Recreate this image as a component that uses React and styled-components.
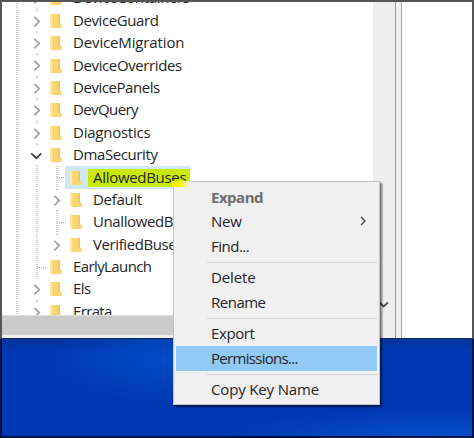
import React from 'react'
import styled, { createGlobalStyle } from 'styled-components'

const GlobalStyle = createGlobalStyle`
  body {
    margin: 0;
    overflow: hidden;
    font-family: 'Open Sans', 'Noto Sans', sans-serif;
    font-size: 15px;
    color: #252525;
  }
  * {
    box-sizing: border-box;
  }
`

const Desktop = styled.div`
  position: relative;
  display: flex;
  flex-direction: column;
  width: 474px;
  height: 438px;
  overflow: hidden;
`

const Wallpaper = styled.div`
  flex: 1;
  border: 2px solid #001248;
  border-top: 0;
  background:
    radial-gradient(ellipse 120px 44px at 165px 20px, #004bc4 0%, rgba(0, 75, 196, 0) 100%),
    radial-gradient(ellipse 200px 24px at 430px 95px, #064dc8 0%, rgba(6, 77, 200, 0) 100%),
    linear-gradient(#02349c, #0038b4 14px, #0038b4 100%);
`

const Window = styled.div`
  display: flex;
  width: 474px;
  height: 339px;
  border: 2px solid #575556;
  border-bottom: 1px solid #14295c;
  background: #fff;
`

const TreePane = styled.div`
  display: flex;
  flex-direction: column;
  width: 371px;
`

const Tree = styled.div`
  height: 313px;
  overflow: hidden;
`

const Rows = styled.div`
  margin-top: -14.8px;
  padding-left: 4.5px;
`

const Row = styled.div`
  display: flex;
  height: 22.4px;
`

const HorizontalBar = styled.div`
  height: 23px;
  background: #cbcbcb;
  border-top: 1px solid #dedede;
  border-bottom: 3px solid #efefef;
`

const VerticalBar = styled.div`
  display: flex;
  align-items: flex-end;
  justify-content: center;
  width: 22px;
  padding-bottom: 29px;
  background: #eee;
`

const Splitter = styled.div`
  width: 7px;
  border-left: 1px solid #999;
  border-right: 1px solid #a8a8a8;
  background: #f0f0f0;
`

const GuideCell = styled.svg`
  flex: none;
  width: 20px;
  height: 22.4px;
`

const Entry = styled.div`
  display: flex;
  align-items: center;
  margin-left: -1.5px;
  padding-left: 5px;
  background: ${props => (props.$selected ? '#cde8fb' : 'none')};
`

const Label = styled.span`
  margin-left: 6px;
  padding: 0 4px 0 5px;
  height: 18px;
  line-height: 17px;
  white-space: nowrap;
  letter-spacing: ${props => props.$spacing}px;
  background: ${props => (props.$marked ? '#c8e900' : 'none')};
`

const Menu = styled.div`
  position: absolute;
  left: 173px;
  top: 181px;
  width: 207px;
  height: 224px;
  padding: 3px 2px;
  border: 1px solid #c4c4c4;
  background: #f0f0f0;
  box-shadow: 2px 2px 2px rgba(0, 0, 0, 0.55);
`

const MarkerEdge = styled.div`
  position: absolute;
  left: -2px;
  top: -1px;
  width: 18px;
  height: 6px;
  background: linear-gradient(90deg, #ecf500 0%, #fbf200 55%, #f4f0a0 75%, #f0f0f0);
`

const MenuItem = styled.div`
  display: flex;
  align-items: center;
  justify-content: space-between;
  height: 24.5px;
  padding: 0 11px 1px 35px;
  font-weight: ${props => (props.$bold ? 700 : 400)};
  color: ${props => (props.$bold ? '#6d6d6d' : '#252525')};
  letter-spacing: ${props => props.$spacing || 0}px;
  background: ${props => (props.$active ? '#91c9f7' : 'none')};
`

const Separator = styled.div`
  height: 7px;
  margin-left: 31px;
  padding-top: 3px;

  &::after {
    content: '';
    display: block;
    height: 1px;
    background: #d5d5d5;
  }
`

const Guide = ({ type }) => (
  <GuideCell viewBox="0 0 20 22.4" fill="none">
    {type === 'line' && <path d="M10 0v22.4" stroke="#a0a0a0" strokeDasharray="1 1" />}
    {type === 'branch' && <path d="M10 0v22.4M10 11.7h9" stroke="#a0a0a0" strokeDasharray="1 1" />}
    {(type === 'closed' || type === 'open') && <path d="M10 0v1M10 21.4v1" stroke="#999" />}
    {type === 'closed' && <path d="M7.3 6.8l5 4.8-5 4.8" stroke="#a2a2a2" strokeWidth="1.7" />}
    {type === 'open' && <path d="M4.3 9.4l5 4.8 5-4.8" stroke="#404040" strokeWidth="1.8" />}
  </GuideCell>
)

const Folder = () => (
  <svg width="12" height="16" viewBox="0 0 12 16">
    <path d="M0 1h9.6v9l2.1 1.2V15H0z" fill="#f8d672" />
    <path d="M0 1l2.3 1.2V15H0z" fill="#fee7a4" />
    <path d="M8.3 1h1.5v10.4l-1.5-1z" fill="#eec259" />
  </svg>
)

const keys = [
  { name: 'DeviceContainers', guides: ['line', 'closed'], spacing: -0.35 },
  { name: 'DeviceGuard', guides: ['line', 'closed'], spacing: -0.4 },
  { name: 'DeviceMigration', guides: ['line', 'closed'], spacing: -0.14 },
  { name: 'DeviceOverrides', guides: ['line', 'closed'], spacing: -0.38 },
  { name: 'DevicePanels', guides: ['line', 'closed'], spacing: -0.45 },
  { name: 'DevQuery', guides: ['line', 'closed'], spacing: -0.6 },
  { name: 'Diagnostics', guides: ['line', 'closed'], spacing: -0.24 },
  { name: 'DmaSecurity', guides: ['line', 'open'], spacing: -0.4 },
  { name: 'AllowedBuses', guides: ['line', 'line', 'branch'], spacing: -0.3, selected: true },
  { name: 'Default', guides: ['line', 'line', 'closed'], spacing: -0.3 },
  { name: 'UnallowedBuses', guides: ['line', 'line', 'branch'], spacing: -0.4 },
  { name: 'VerifiedBuses', guides: ['line', 'line', 'closed'], spacing: -0.4 },
  { name: 'EarlyLaunch', guides: ['line', 'branch'], spacing: -0.6 },
  { name: 'Els', guides: ['line', 'closed'], spacing: -0.6 },
  { name: 'Errata', guides: ['line', 'closed'], spacing: -0.65 },
]

const App = () => {
  return (
    <Desktop>
      <GlobalStyle />
      <Window>
        <TreePane>
          <Tree>
            <Rows>
              {keys.map(key => (
                <Row key={key.name}>
                  {key.guides.map((type, i) => (
                    <Guide key={i} type={type} />
                  ))}
                  <Entry $selected={key.selected}>
                    <Folder />
                    <Label $marked={key.selected} $spacing={key.spacing}>{key.name}</Label>
                  </Entry>
                </Row>
              ))}
            </Rows>
          </Tree>
          <HorizontalBar />
        </TreePane>
        <VerticalBar>
          <svg width="12" height="8" viewBox="0 0 12 8" fill="none">
            <path d="M1.5 1.5l4.2 4 4.2-4" stroke="#505050" strokeWidth="1.8" />
          </svg>
        </VerticalBar>
        <Splitter />
      </Window>
      <Wallpaper />
      <Menu>
        <MarkerEdge />
        <MenuItem $bold $spacing={-0.5}>Expand</MenuItem>
        <MenuItem $spacing={-0.2}>
          New
          <svg width="6" height="10" viewBox="0 0 6 10" fill="none">
            <path d="M1 1l4 4-4 4" stroke="#444" strokeWidth="1.3" />
          </svg>
        </MenuItem>
        <MenuItem $spacing={-0.5}>Find...</MenuItem>
        <Separator />
        <MenuItem $spacing={-0.1}>Delete</MenuItem>
        <MenuItem $spacing={-0.5}>Rename</MenuItem>
        <Separator />
        <MenuItem $spacing={-0.4}>Export</MenuItem>
        <MenuItem $active $spacing={-0.7}>Permissions...</MenuItem>
        <Separator />
        <MenuItem $spacing={-0.15}>Copy Key Name</MenuItem>
      </Menu>
    </Desktop>
  )
}

export default App
